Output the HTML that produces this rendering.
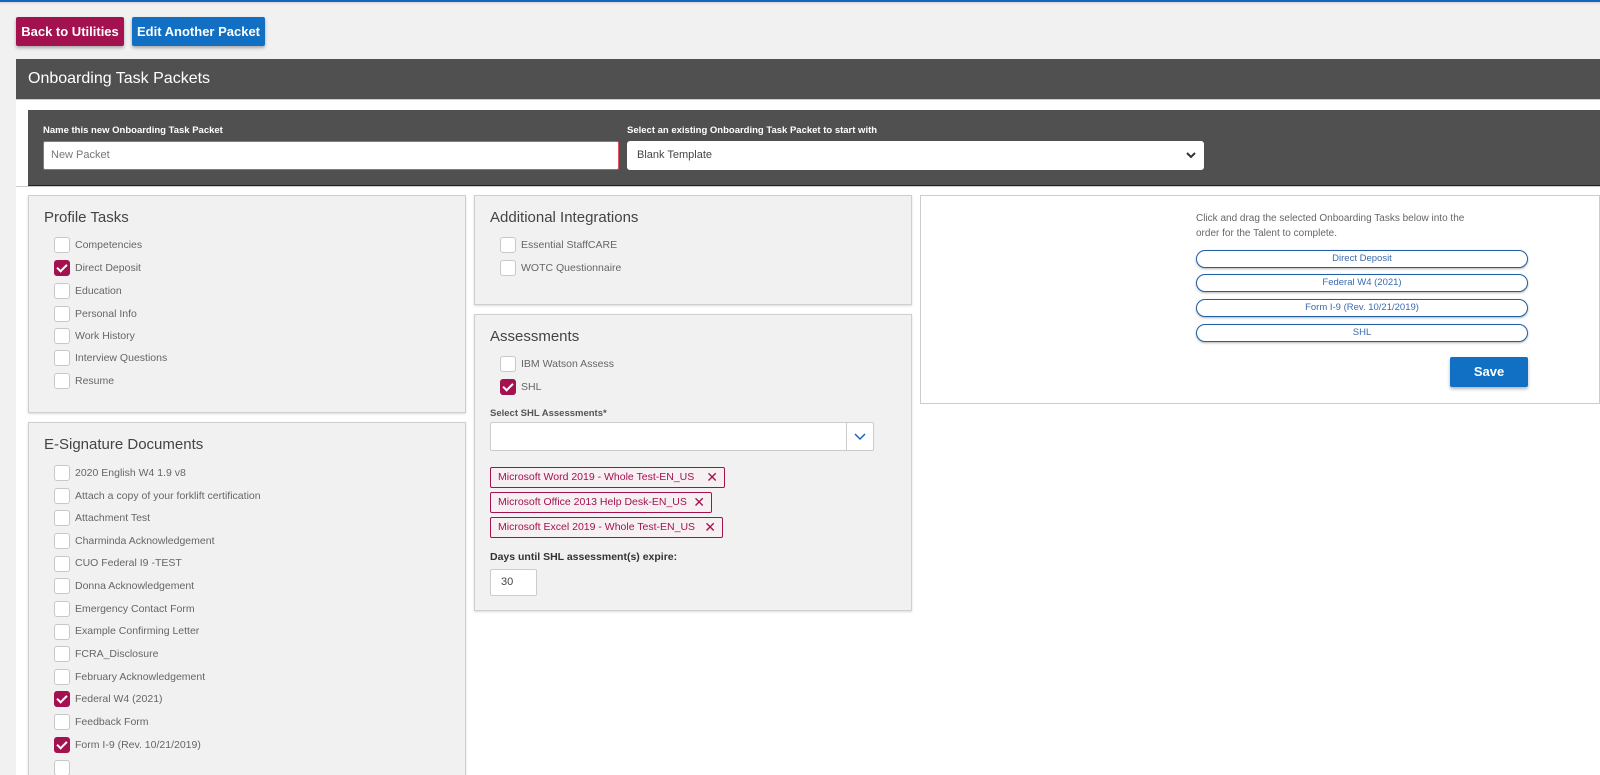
<!DOCTYPE html>
<html style="overflow:hidden"><head><meta charset="utf-8"><style>
*{box-sizing:border-box;margin:0;padding:0}
html,body{width:1600px;height:775px;overflow:hidden}
body{background:#f1f1f1;font-family:"Liberation Sans",sans-serif}
#w{position:relative;width:1600px;height:775px;overflow:hidden}
.a{position:absolute}
.btn{position:absolute;top:17px;height:29px;color:#fff;font-size:13px;font-weight:bold;line-height:29px;text-align:center;border-radius:2px;box-shadow:0 2px 3px rgba(0,0,0,.3)}
.panel{position:absolute;background:#f1f1f1;border:1px solid #cfcfcf;box-shadow:0 1px 2px rgba(0,0,0,.15)}
.h{position:absolute;font-size:15px;color:#444}
.cb{position:absolute;width:16px;height:16px;border:1px solid #c8c8c8;border-radius:3px;background:#fff}
.cb.on{background:#a3124f;border-color:#a3124f}
.cb.on::after{content:"";position:absolute;left:4px;top:1px;width:4px;height:8px;border:solid #fff;border-width:0 2px 2px 0;transform:rotate(45deg)}
.lb{position:absolute;font-size:10.5px;color:#666}
.pill{position:absolute;left:1196px;width:332px;height:18px;border:1.5px solid #1f5fa8;border-radius:9px;background:#fff;text-align:center;font-size:9.5px;line-height:15px;color:#3a6bb0;box-shadow:0 1px 2px rgba(0,0,0,.3)}
.tag{position:absolute;left:490px;height:21px;border:1px solid #a3124f;border-radius:2px;font-size:10.5px;color:#a3124f;line-height:19px;padding-left:7px;background:#f6f0f2}
.tag span{position:absolute;right:6px;top:0;font-size:14px}
</style></head><body><div id="w">
<div class="a" style="left:0;top:0;width:1600px;height:2px;background:#1565c0"></div>
<div class="a" style="left:0;top:2px;width:1600px;height:3px;background:linear-gradient(#d8d8d8,#f1f1f1)"></div>
<div class="btn" style="left:16px;width:108px;background:#a3124f">Back to Utilities</div>
<div class="btn" style="left:132px;width:133px;background:#1270c4">Edit Another Packet</div>
<div class="a" style="left:16px;top:59px;width:1584px;height:716px;background:#fff"></div>
<div class="a" style="left:16px;top:59px;width:1584px;height:40px;background:#505050;color:#fff;font-size:16px;line-height:40px;padding-left:12px">Onboarding Task Packets</div>
<div class="a" style="left:16px;top:99px;width:1584px;height:1px;background:#ccc"></div>
<div class="a" style="left:28px;top:110px;width:1572px;height:76px;background:#505050;border-bottom:1px solid #222"></div>
<div class="a" style="left:43px;top:125px;color:#fff;font-size:9.5px;font-weight:bold">Name this new Onboarding Task Packet</div>
<div class="a" style="left:43px;top:141px;width:576px;height:29px;background:#fff;border:1px solid #e05060;border-radius:2px;font-size:11px;color:#777;line-height:27px;padding-left:7px">New Packet</div>
<div class="a" style="left:627px;top:125px;color:#fff;font-size:9.5px;font-weight:bold">Select an existing Onboarding Task Packet to start with</div>
<div class="a" style="left:627px;top:141px;width:577px;height:29px;background:#fff;border-radius:3px;font-size:11px;color:#444;line-height:29px;padding-left:10px">Blank Template
<svg class="a" style="right:8px;top:11px" width="10" height="7" viewBox="0 0 10 7"><path d="M1 1l4 4 4-4" stroke="#333" stroke-width="2" fill="none"/></svg></div>
<div class="a" style="left:16px;top:186px;width:1584px;height:1px;background:#ccc"></div>

<div class="panel" style="left:28px;top:195px;width:438px;height:218px"></div>
<div class="h" style="left:44px;top:209px">Profile Tasks</div>
<div class="cb" style="left:54px;top:237px"></div><div class="lb" style="left:75px;top:239px">Competencies</div>
<div class="cb on" style="left:54px;top:260px"></div><div class="lb" style="left:75px;top:262px">Direct Deposit</div>
<div class="cb" style="left:54px;top:283px"></div><div class="lb" style="left:75px;top:285px">Education</div>
<div class="cb" style="left:54px;top:306px"></div><div class="lb" style="left:75px;top:308px">Personal Info</div>
<div class="cb" style="left:54px;top:328px"></div><div class="lb" style="left:75px;top:330px">Work History</div>
<div class="cb" style="left:54px;top:350px"></div><div class="lb" style="left:75px;top:352px">Interview Questions</div>
<div class="cb" style="left:54px;top:373px"></div><div class="lb" style="left:75px;top:375px">Resume</div>

<div class="panel" style="left:28px;top:422px;width:438px;height:380px"></div>
<div class="h" style="left:44px;top:436px">E-Signature Documents</div>
<div class="cb" style="left:54px;top:465px"></div><div class="lb" style="left:75px;top:467px">2020 English W4 1.9 v8</div>
<div class="cb" style="left:54px;top:488px"></div><div class="lb" style="left:75px;top:490px">Attach a copy of your forklift certification</div>
<div class="cb" style="left:54px;top:510px"></div><div class="lb" style="left:75px;top:512px">Attachment Test</div>
<div class="cb" style="left:54px;top:533px"></div><div class="lb" style="left:75px;top:535px">Charminda Acknowledgement</div>
<div class="cb" style="left:54px;top:556px"></div><div class="lb" style="left:75px;top:557px">CUO Federal I9 -TEST</div>
<div class="cb" style="left:54px;top:578px"></div><div class="lb" style="left:75px;top:580px">Donna Acknowledgement</div>
<div class="cb" style="left:54px;top:601px"></div><div class="lb" style="left:75px;top:603px">Emergency Contact Form</div>
<div class="cb" style="left:54px;top:624px"></div><div class="lb" style="left:75px;top:625px">Example Confirming Letter</div>
<div class="cb" style="left:54px;top:646px"></div><div class="lb" style="left:75px;top:648px">FCRA_Disclosure</div>
<div class="cb" style="left:54px;top:669px"></div><div class="lb" style="left:75px;top:671px">February Acknowledgement</div>
<div class="cb on" style="left:54px;top:691px"></div><div class="lb" style="left:75px;top:693px">Federal W4 (2021)</div>
<div class="cb" style="left:54px;top:714px"></div><div class="lb" style="left:75px;top:716px">Feedback Form</div>
<div class="cb on" style="left:54px;top:737px"></div><div class="lb" style="left:75px;top:739px">Form I-9 (Rev. 10/21/2019)</div>
<div class="cb" style="left:54px;top:760px"></div>

<div class="panel" style="left:474px;top:195px;width:438px;height:110px"></div>
<div class="h" style="left:490px;top:209px">Additional Integrations</div>
<div class="cb" style="left:500px;top:237px"></div><div class="lb" style="left:521px;top:239px">Essential StaffCARE</div>
<div class="cb" style="left:500px;top:260px"></div><div class="lb" style="left:521px;top:262px">WOTC Questionnaire</div>

<div class="panel" style="left:474px;top:314px;width:438px;height:297px"></div>
<div class="h" style="left:490px;top:328px">Assessments</div>
<div class="cb" style="left:500px;top:356px"></div><div class="lb" style="left:521px;top:358px">IBM Watson Assess</div>
<div class="cb on" style="left:500px;top:379px"></div><div class="lb" style="left:521px;top:381px">SHL</div>
<div class="a" style="left:490px;top:408px;font-size:9.5px;font-weight:bold;color:#555">Select SHL Assessments*</div>
<div class="a" style="left:490px;top:422px;width:384px;height:29px;background:#fff;border:1px solid #ccc;border-radius:2px"></div>
<div class="a" style="left:846px;top:423px;width:1px;height:27px;background:#ccc"></div>
<svg class="a" style="left:854px;top:433px" width="12" height="8" viewBox="0 0 12 8"><path d="M1 1l5 5 5-5" stroke="#1565c0" stroke-width="1.5" fill="none"/></svg>
<div class="tag" style="top:467px;width:235px">Microsoft Word 2019 - Whole Test-EN_US<span>✕</span></div>
<div class="tag" style="top:492px;width:222px">Microsoft Office 2013 Help Desk-EN_US<span>✕</span></div>
<div class="tag" style="top:517px;width:233px">Microsoft Excel 2019 - Whole Test-EN_US<span>✕</span></div>
<div class="a" style="left:490px;top:551px;font-size:10.5px;font-weight:bold;color:#333">Days until SHL assessment(s) expire:</div>
<div class="a" style="left:490px;top:569px;width:47px;height:27px;background:#fff;border:1px solid #ccc;border-radius:2px;font-size:11px;color:#444;line-height:25px;padding-left:10px">30</div>

<div class="a" style="left:920px;top:195px;width:680px;height:209px;background:#fff;border:1px solid #ccc"></div>
<div class="a" style="left:1196px;top:211px;width:290px;font-size:10px;color:#666;line-height:15px">Click and drag the selected Onboarding Tasks below into the order for the Talent to complete.</div>
<div class="pill" style="top:250px">Direct Deposit</div>
<div class="pill" style="top:274px">Federal W4 (2021)</div>
<div class="pill" style="top:299px">Form I-9 (Rev. 10/21/2019)</div>
<div class="pill" style="top:324px">SHL</div>
<div class="a" style="left:1450px;top:357px;width:78px;height:30px;background:#1270c4;color:#fff;font-size:13px;font-weight:bold;text-align:center;line-height:30px;border-radius:2px;box-shadow:0 2px 3px rgba(0,0,0,.3)">Save</div>
</div></body></html>
